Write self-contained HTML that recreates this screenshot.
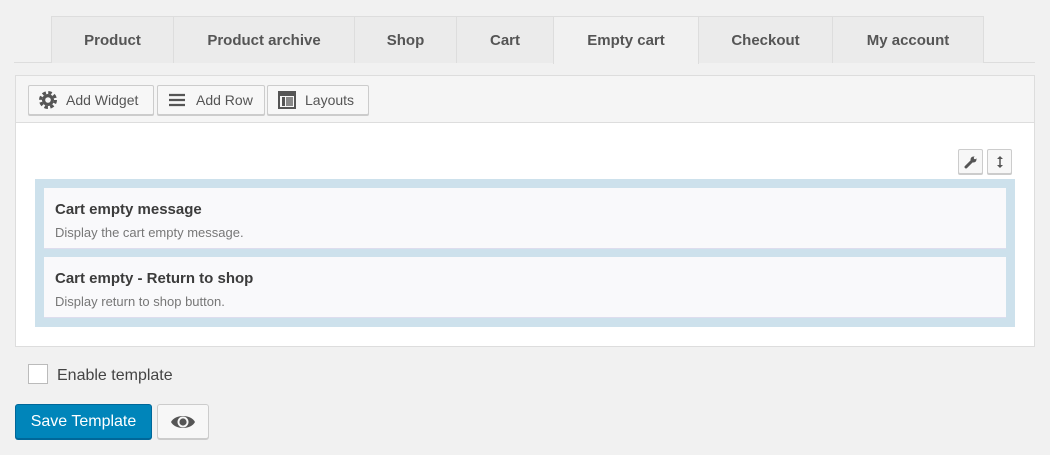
<!DOCTYPE html>
<html><head><style>
*{box-sizing:border-box;margin:0;padding:0}
body{width:1050px;height:455px;background:#f1f1f1;font-family:"Liberation Sans",sans-serif;color:#444;position:relative;overflow:hidden}
.a{position:absolute}
.tab{position:absolute;top:16px;height:47px;border:1px solid #ddd;border-bottom:none;background:#ebebeb;font-weight:bold;font-size:15px;color:#555;display:flex;align-items:center;justify-content:center}
.btn{position:absolute;top:85px;height:30px;border:1px solid #ccc;border-radius:2px;background:#f7f7f7;box-shadow:0 1px 0 #ccc;font-size:14px;color:#555;display:flex;align-items:center;padding-left:9px}
.w{position:absolute;left:44px;width:962px;height:61px;background:#f9f9fb;border-bottom:1px solid #dde;padding:13px 11px}
.w b{display:block;font-size:15px;color:#3c3c3c;margin-bottom:6px}
.w span{font-size:13px;color:#777}
.sb{position:absolute;top:149px;width:25px;height:25px;border:1px solid #ccc;border-radius:2px;background:#f7f7f7;box-shadow:0 1px 0 #ccc;display:flex;align-items:center;justify-content:center}
</style></head><body>
<div class="a" style="left:14px;top:62px;width:1021px;height:1px;background:#ddd"></div>
<div class="tab" style="left:51px;width:123px">Product</div>
<div class="tab" style="left:173px;width:182px">Product archive</div>
<div class="tab" style="left:354px;width:103px">Shop</div>
<div class="tab" style="left:456px;width:98px">Cart</div>
<div class="tab" style="left:553px;width:146px;background:#f1f1f1;height:48px">Empty cart</div>
<div class="tab" style="left:698px;width:135px">Checkout</div>
<div class="tab" style="left:832px;width:152px">My account</div>

<div class="a" style="left:15px;top:75px;width:1020px;height:272px;border:1px solid #ddd;background:#fff"></div>
<div class="a" style="left:16px;top:76px;width:1018px;height:47px;background:#f5f5f5;border-bottom:1px solid #ddd"></div>
<div class="btn" style="left:28px;width:126px"><svg width="20" height="20" viewBox="0 0 20 20"><circle cx="10" cy="10" r="7.5" fill="none" stroke="#555" stroke-width="3" stroke-dasharray="3.5 2.4"/><circle cx="10" cy="10" r="6" fill="#555"/><circle cx="10" cy="10" r="2.8" fill="#f7f7f7"/></svg><span style="margin-left:8px">Add Widget</span></div>
<div class="btn" style="left:157px;width:108px"><svg width="20" height="18" viewBox="0 0 20 18"><path d="M2 4h16M2 9h16M2 14h16" stroke="#555" stroke-width="2.2"/></svg><span style="margin-left:9px">Add Row</span></div>
<div class="btn" style="left:267px;width:102px"><svg width="20" height="20" viewBox="0 0 20 20"><rect x="2" y="2" width="16" height="16" fill="none" stroke="#555" stroke-width="2"/><rect x="2" y="2" width="16" height="4" fill="#555"/><rect x="5" y="7" width="3" height="9" fill="#555"/><rect x="9" y="7" width="7" height="9" fill="#888"/></svg><span style="margin-left:8px">Layouts</span></div>

<div class="sb" style="left:958px"><svg width="14" height="14" viewBox="0 0 14 14"><path d="M2 12L8 6" stroke="#555" stroke-width="3" stroke-linecap="round"/><circle cx="9.5" cy="4.5" r="3" fill="#555"/><circle cx="11" cy="3" r="1.2" fill="#f7f7f7"/></svg></div>
<div class="sb" style="left:987px"><svg width="10" height="14" viewBox="0 0 10 14"><path d="M5 3v8" stroke="#555" stroke-width="1.5"/><path d="M2 4l3-3 3 3zM2 10l3 3 3-3z" fill="#555"/></svg></div>

<div class="a" style="left:35px;top:179px;width:980px;height:148px;background:#cde1ec"></div>
<div class="w" style="top:188px"><b>Cart empty message</b><span>Display the cart empty message.</span></div>
<div class="w" style="top:257px"><b>Cart empty - Return to shop</b><span>Display return to shop button.</span></div>

<div class="a" style="left:28px;top:364px;width:20px;height:20px;border:1px solid #bbb;background:#fff"></div>
<div class="a" style="left:57px;top:367px;font-size:16px;color:#444">Enable template</div>
<div class="a" style="left:15px;top:404px;width:137px;height:35px;background:#0085ba;border:1px solid #006799;border-radius:3px;box-shadow:0 1px 0 #006799;color:#fff;font-size:16px;display:flex;align-items:center;justify-content:center">Save Template</div>
<div class="a" style="left:157px;top:404px;width:52px;height:35px;background:#f7f7f7;border:1px solid #ccc;border-radius:3px;box-shadow:0 1px 0 #ccc;display:flex;align-items:center;justify-content:center"><svg width="26" height="18" viewBox="0 0 26 18"><path d="M1 9C5 1 21 1 25 9C21 17 5 17 1 9Z" fill="#555"/><circle cx="13" cy="9" r="5.5" fill="#f7f7f7"/><circle cx="13" cy="9" r="3.6" fill="#555"/></svg></div>
</body></html>
